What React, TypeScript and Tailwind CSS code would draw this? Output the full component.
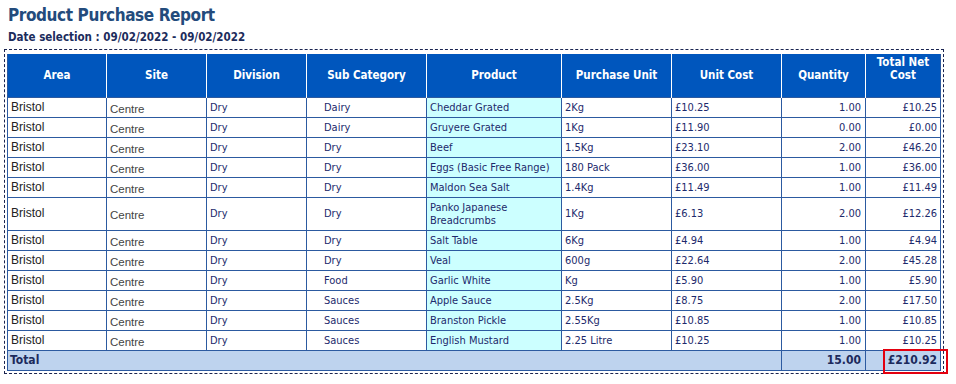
import React from 'react';

type Row = {
  area: string;
  site: string;
  division: string;
  sub: string;
  product: string;
  unit: string;
  cost: string;
  qty: string;
  total: string;
};

const rows: Row[] = [
  { area: 'Bristol', site: 'Centre', division: 'Dry', sub: 'Dairy', product: 'Cheddar Grated', unit: '2Kg', cost: '£10.25', qty: '1.00', total: '£10.25' },
  { area: 'Bristol', site: 'Centre', division: 'Dry', sub: 'Dairy', product: 'Gruyere Grated', unit: '1Kg', cost: '£11.90', qty: '0.00', total: '£0.00' },
  { area: 'Bristol', site: 'Centre', division: 'Dry', sub: 'Dry', product: 'Beef', unit: '1.5Kg', cost: '£23.10', qty: '2.00', total: '£46.20' },
  { area: 'Bristol', site: 'Centre', division: 'Dry', sub: 'Dry', product: 'Eggs (Basic Free Range)', unit: '180 Pack', cost: '£36.00', qty: '1.00', total: '£36.00' },
  { area: 'Bristol', site: 'Centre', division: 'Dry', sub: 'Dry', product: 'Maldon Sea Salt', unit: '1.4Kg', cost: '£11.49', qty: '1.00', total: '£11.49' },
  { area: 'Bristol', site: 'Centre', division: 'Dry', sub: 'Dry', product: 'Panko Japanese Breadcrumbs', unit: '1Kg', cost: '£6.13', qty: '2.00', total: '£12.26' },
  { area: 'Bristol', site: 'Centre', division: 'Dry', sub: 'Dry', product: 'Salt Table', unit: '6Kg', cost: '£4.94', qty: '1.00', total: '£4.94' },
  { area: 'Bristol', site: 'Centre', division: 'Dry', sub: 'Dry', product: 'Veal', unit: '600g', cost: '£22.64', qty: '2.00', total: '£45.28' },
  { area: 'Bristol', site: 'Centre', division: 'Dry', sub: 'Food', product: 'Garlic White', unit: 'Kg', cost: '£5.90', qty: '1.00', total: '£5.90' },
  { area: 'Bristol', site: 'Centre', division: 'Dry', sub: 'Sauces', product: 'Apple Sauce', unit: '2.5Kg', cost: '£8.75', qty: '2.00', total: '£17.50' },
  { area: 'Bristol', site: 'Centre', division: 'Dry', sub: 'Sauces', product: 'Branston Pickle', unit: '2.55Kg', cost: '£10.85', qty: '1.00', total: '£10.85' },
  { area: 'Bristol', site: 'Centre', division: 'Dry', sub: 'Sauces', product: 'English Mustard', unit: '2.25 Litre', cost: '£10.25', qty: '1.00', total: '£10.25' },
];

const th = 'border-x border-white bg-[#0056bd] text-white font-bold text-[11.5px] leading-[13px] text-center align-middle px-1';
const td = 'border border-[#2c5aa0] px-[3px] py-[3px] leading-[13px] align-middle';

export default function App() {
  return (
    <div className="w-[956px] h-[384px] bg-white pt-[4px] font-['DejaVu_Sans_Condensed','DejaVu_Sans',sans-serif]">
      <h1 className="pl-2 text-[17px] leading-[22px] font-bold text-[#234b7c] tracking-[-0.4px]">Product Purchase Report</h1>
      <p className="pl-2 mt-[4px] text-[11.5px] leading-[15px] font-bold text-[#1c2c5c]">Date selection : 09/02/2022 - 09/02/2022</p>

      <div className="ml-1 mt-[4px] w-[940px] border border-dashed border-[#1a2450] px-[2px] pt-[4px] pb-[2px]">
        <table className="w-[933px] table-fixed border-collapse text-[11px] text-[#1d2a6c]">
          <colgroup>
            <col className="w-[99px]" />
            <col className="w-[100px]" />
            <col className="w-[100px]" />
            <col className="w-[120px]" />
            <col className="w-[135px]" />
            <col className="w-[110px]" />
            <col className="w-[110px]" />
            <col className="w-[84px]" />
            <col className="w-[75px]" />
          </colgroup>
          <thead>
            <tr className="h-[43px]">
              <th className={`${th} border-l-[#2c5aa0]`}>Area</th>
              <th className={th}>Site</th>
              <th className={th}>Division</th>
              <th className={th}>Sub Category</th>
              <th className={th}>Product</th>
              <th className={th}>Purchase Unit</th>
              <th className={th}>Unit Cost</th>
              <th className={th}>Quantity</th>
              <th className={`${th} border-r-[#2c5aa0] !align-top pt-[2px]`}>Total Net Cost</th>
            </tr>
          </thead>
          <tbody>
            {rows.map((r, i) => (
              <tr key={i}>
                <td className={`${td} font-['Liberation_Sans',sans-serif] text-[12px] text-[#222]`}>{r.area}</td>
                <td className={`${td} font-['Liberation_Sans',sans-serif] text-[11.5px] text-[#444] pt-[5px] pb-[1px]`}>{r.site}</td>
                <td className={td}>{r.division}</td>
                <td className={`${td} pl-[17px]`}>{r.sub}</td>
                <td className={`${td} bg-[#ccffff]`}>{r.product}</td>
                <td className={`${td} whitespace-nowrap`}>{r.unit}</td>
                <td className={td}>{r.cost}</td>
                <td className={`${td} text-right pr-[4px]`}>{r.qty}</td>
                <td className={`${td} text-right`}>{r.total}</td>
              </tr>
            ))}
            <tr className="bg-[#bed3ee] font-bold text-[12px] text-[#1c2a5c]">
              <td colSpan={7} className={`${td} pl-[2px]`}>Total</td>
              <td className={`${td} text-right pr-[4px]`}>15.00</td>
              <td className={`${td} text-right relative`}>
                £210.92
                <span className="absolute left-[17px] -right-[8px] -top-[2px] -bottom-[4px] border-2 border-[#e3000f]" />
              </td>
            </tr>
          </tbody>
        </table>
      </div>
    </div>
  );
}
